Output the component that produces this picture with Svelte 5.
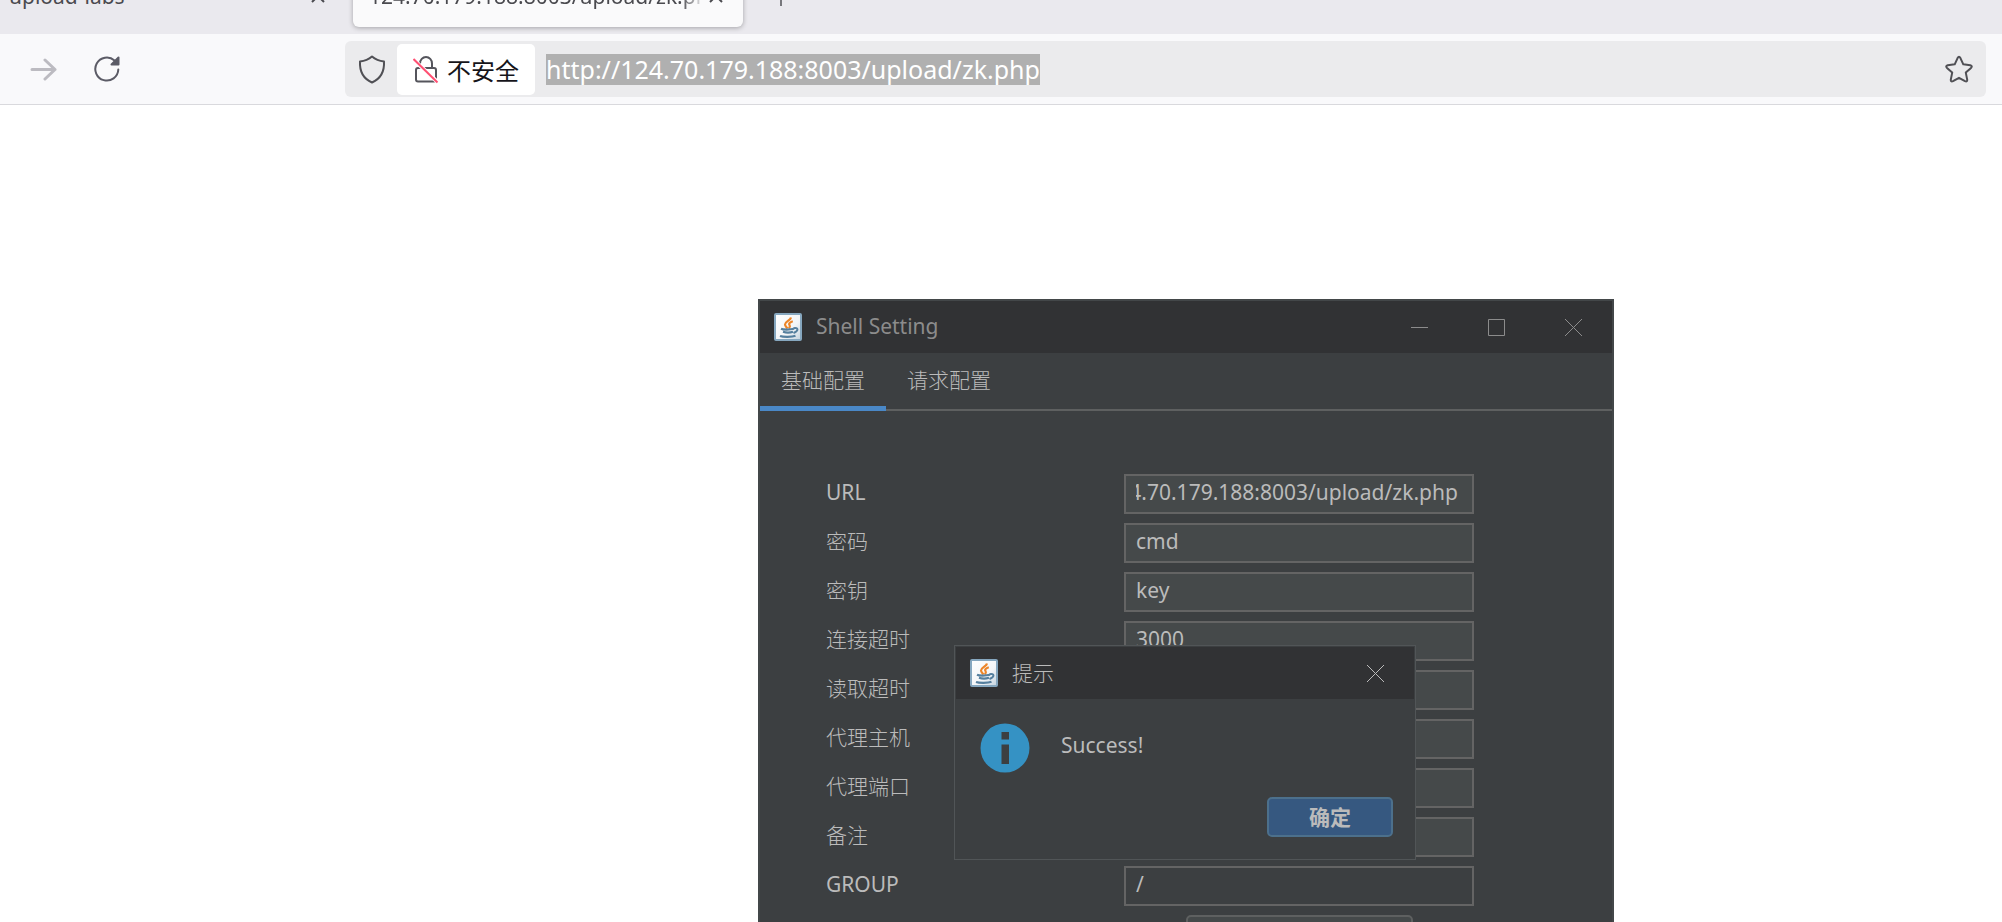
<script>
  import { onMount } from 'svelte';

  const address = 'http://124.70.179.188:8003/upload/zk.php';

  const fields = [
    { id: 'url', label: 'URL', value: address, latin: true },
    { id: 'password', label: '密码', value: 'cmd' },
    { id: 'secret', label: '密钥', value: 'key' },
    { id: 'connTimeout', label: '连接超时', value: '3000' },
    { id: 'readTimeout', label: '读取超时', value: '' },
    { id: 'proxyHost', label: '代理主机', value: '' },
    { id: 'proxyPort', label: '代理端口', value: '' },
    { id: 'remark', label: '备注', value: '' },
    { id: 'group', label: 'GROUP', value: '/', latin: true }
  ];

  let form;

  // long values show their tail, like a Swing text field
  onMount(() => {
    for (const input of form.querySelectorAll('input')) {
      input.scrollLeft = input.scrollWidth;
    }
  });
</script>

{#snippet javaIcon()}
  <svg class="java" viewBox="0 0 28 28" aria-hidden="true">
    <defs>
      <linearGradient id="plate" x1="0" y1="0" x2="1" y2="1">
        <stop offset="0" stop-color="#ffffff" />
        <stop offset="0.6" stop-color="#f3f5f7" />
        <stop offset="1" stop-color="#c3d2de" />
      </linearGradient>
    </defs>
    <rect x="1" y="1" width="26" height="26" rx="1" fill="url(#plate)" stroke="#86a7bf" stroke-width="2" />
    <path d="M17 4.500C16.500 7.500 11 8.500 11 11.500C11 13 12.500 14 13.500 15.500M18.800 8.300C16 9.200 14.200 10.500 15.500 12C16.500 13.300 15.500 14.500 15 15.500" fill="none" stroke="#ec8528" stroke-width="2.200" />
    <path d="M7 15.800C9 16.800 16 16.800 20 15.800M9 18.800C12 19.800 16 19.800 19 18.800M6 23C9 24.200 18 24.200 21.500 22.800" fill="none" stroke="#557f9e" stroke-width="2.200" />
    <path d="M19.500 15.200C24.500 14 25 18 19.500 20" fill="none" stroke="#557f9e" stroke-width="2" />
  </svg>
{/snippet}

<div class="screen">
  <nav class="tabs">
    <a class="tab first" href="/">
      <span class="tab-title">upload-labs</span>
      <svg class="x" viewBox="0 0 14 14"><path d="M1 1L13 13M13 1L1 13" /></svg>
    </a>
    <a class="tab active" href="/upload/zk.php">
      <span class="tab-title fade">124.70.179.188:8003/upload/zk.php</span>
      <svg class="x" viewBox="0 0 14 14"><path d="M1 1L13 13M13 1L1 13" /></svg>
    </a>
    <button class="new-tab" aria-label="新建标签页">
      <svg viewBox="0 0 20 20"><path d="M10 0V20M0 10H20" /></svg>
    </button>
  </nav>

  <header class="toolbar">
    <button class="tool" aria-label="前进">
      <svg class="forward" viewBox="0 0 28 28"><path d="M3 14.500H26M16 5L26 14.500L16 24" /></svg>
    </button>
    <button class="tool" aria-label="刷新">
      <svg class="reload" viewBox="0 0 28 28">
        <path d="M25.300 14.500A11.500 11.500 0 1 1 21.500 5.500" />
        <path class="solid" d="M25.500 2.500V9.500H18.500Z" />
      </svg>
    </button>
    <div class="urlbar">
      <svg class="shield" viewBox="0 0 28 30"><path d="M14 2.500C17.500 5.500 21.500 7 26 7.500C26.500 17 23 24.500 14 28.500C5 24.500 1.500 17 2 7.500C6.500 7 10.500 5.500 14 2.500Z" /></svg>
      <button class="security">
        <svg class="lock" viewBox="0 0 26 30">
          <path d="M7 12V9.500A6 6.500 0 0 1 19 9.500V13.500" />
          <rect x="3" y="14" width="20" height="13.500" rx="2" />
          <path class="halo" d="M1.500 6.500L24.500 28" />
          <path class="slash" d="M0.500 5L24.500 28.500" />
        </svg>
        <span>不安全</span>
      </button>
      <input class="address" type="text" value={address} size="40" aria-label="地址" />
      <button class="star" aria-label="收藏">
        <svg viewBox="0 0 28 28"><path d="M12.700 2.800Q14 0.500 15.300 2.800L18.300 9.300L25.300 10.200Q27.800 10.900 26 12.900L20.800 17.600L22.200 24.600Q22.400 27.200 20 26.200L14 22.800L8 26.200Q5.600 27.200 5.800 24.600L7.200 17.600L2 12.900Q0.200 10.900 2.700 10.200L9.700 9.300Z" /></svg>
      </button>
    </div>
  </header>

  <section class="window">
    <div class="titlebar">
      {@render javaIcon()}
      <h1>Shell Setting</h1>
      <div class="controls">
        <button aria-label="最小化"><svg viewBox="0 0 17 17"><path d="M0 8.500H17" /></svg></button>
        <button aria-label="最大化"><svg viewBox="0 0 17 17"><path d="M0.500 0.500H16.500V16.500H0.500Z" /></svg></button>
        <button aria-label="关闭"><svg viewBox="0 0 17 17"><path d="M0 0L17 17M17 0L0 17" /></svg></button>
      </div>
    </div>

    <div class="config-tabs">
      <button class="selected">基础配置</button>
      <button>请求配置</button>
    </div>

    <form bind:this={form}>
      {#each fields as field}
        <div class="row">
          <label for={field.id} class:latin={field.latin}>{field.label}</label>
          <input id={field.id} class:plain={field.id === 'group'} type="text" value={field.value} />
        </div>
      {/each}
      <div class="actions">
        <button class="submit" type="button" aria-label="添加"></button>
      </div>
    </form>
  </section>

  <div class="dialog" role="dialog" aria-label="提示">
    <div class="titlebar lit">
      {@render javaIcon()}
      <h1>提示</h1>
      <div class="controls">
        <button aria-label="关闭"><svg viewBox="0 0 17 17"><path d="M0 0L17 17M17 0L0 17" /></svg></button>
      </div>
    </div>
    <div class="message">
      <svg class="info" viewBox="0 0 50 50">
        <circle cx="25" cy="25" r="24.500" />
        <path d="M21.500 9H29V16.500H21.500ZM21.500 21.500H29V41H21.500Z" />
      </svg>
      <p>Success!</p>
    </div>
    <button class="ok">确定</button>
  </div>
</div>

<style>
  :global(body) {
    margin: 0;
    background: #fff;
  }

  .screen {
    position: relative;
    height: 100vh;
    overflow: hidden;
    font-family: 'Noto Sans', 'Noto Sans CJK SC', sans-serif;
  }

  svg {
    display: block;
    flex: none;
    fill: none;
  }

  button {
    padding: 0;
    border: 0;
    background: none;
    font: inherit;
    color: inherit;
  }

  /* browser tab strip */
  .tabs {
    display: flex;
    align-items: flex-end;
    box-sizing: border-box;
    height: 34px;
    padding-bottom: 7px;
    overflow: hidden;
    background: #eae9ee;
  }

  .tab {
    display: flex;
    align-items: center;
    box-sizing: border-box;
    height: 62px;
    font-size: 21px;
    color: #4a4a4f;
    text-decoration: none;
  }

  .first {
    width: 353px;
    padding: 0 28px 0 9px;
  }

  .active {
    width: 390px;
    padding: 0 20px 0 16px;
    border-radius: 6px;
    background: #fafafb;
    box-shadow: 0 1px 5px rgba(0, 0, 0, 0.3);
  }

  .tab-title {
    flex: 1;
    overflow: hidden;
    white-space: nowrap;
  }

  .fade {
    mask-image: linear-gradient(to left, transparent 4px, #000 28px);
  }

  .x {
    width: 14px;
    stroke: #4a4a4f;
    stroke-width: 2;
  }

  .new-tab {
    height: 62px;
    margin-left: 28px;
  }

  .new-tab svg {
    width: 20px;
    stroke: #77777c;
    stroke-width: 2;
  }

  /* navigation toolbar */
  .toolbar {
    display: flex;
    align-items: center;
    box-sizing: border-box;
    height: 71px;
    padding: 0 16px 0 29px;
    border-bottom: 1px solid #d9d9dd;
    background: #f9f9fb;
  }

  .tool {
    margin-right: 36px;
  }

  .tool svg {
    width: 28px;
    stroke: #5b5b66;
    stroke-width: 2;
    stroke-linecap: round;
    stroke-linejoin: round;
  }

  .tool .forward {
    stroke: #bcbbc1;
    stroke-width: 3;
  }

  .solid {
    fill: #5b5b66;
  }

  .urlbar {
    display: flex;
    flex: 1;
    align-items: center;
    box-sizing: border-box;
    height: 56px;
    margin-left: 188px;
    padding: 0 13px;
    border-radius: 6px;
    background: #ebebed;
  }

  .shield {
    width: 28px;
    stroke: #505055;
    stroke-width: 2;
    stroke-linejoin: round;
  }

  .security {
    display: flex;
    align-items: center;
    gap: 8px;
    height: 51px;
    margin: 0 11px;
    padding: 0 16px;
    border-radius: 5px;
    background: #fff;
    font-size: 24px;
    color: #15141a;
  }

  .lock {
    width: 26px;
    stroke: #55555c;
    stroke-width: 2;
  }

  .lock .halo {
    stroke: #fff;
    stroke-width: 4;
  }

  .lock .slash {
    stroke: #ff4f72;
  }

  .address {
    field-sizing: content;
    height: 31px;
    padding: 0;
    border: 0;
    background: #b0b0b0;
    font: 25px/31px 'Noto Sans', sans-serif;
    color: #fff;
  }

  .star {
    margin-left: auto;
  }

  .star svg {
    width: 28px;
    stroke: #505055;
    stroke-width: 2;
    stroke-linejoin: round;
  }

  /* desktop windows */
  .window,
  .dialog {
    position: absolute;
    box-sizing: border-box;
    background: #3c3f41;
    font-size: 21px;
    color: #bbb;
  }

  .window {
    top: 299px;
    left: 758px;
    width: 856px;
    border: 2px solid #434749;
  }

  .titlebar {
    display: flex;
    align-items: center;
    height: 52px;
    padding: 0 30px 0 14px;
    background: #313234;
    color: #8c8c8c;
  }

  .java {
    width: 28px;
  }

  h1 {
    flex: 1;
    margin: 0 0 0 14px;
    padding-bottom: 2px;
    font-size: 21px;
    font-weight: 400;
  }

  .lit {
    color: #bbb;
  }

  .lit h1 {
    font-weight: 300;
  }

  .controls {
    display: flex;
    gap: 60px;
  }

  .controls svg {
    width: 17px;
    stroke: currentColor;
    stroke-width: 1;
  }

  .config-tabs {
    display: flex;
    box-sizing: border-box;
    height: 58px;
    border-bottom: 2px solid #5e6060;
    font-weight: 300;
  }

  .config-tabs button {
    box-sizing: border-box;
    width: 126px;
    height: 58px;
    padding-bottom: 2px;
    border-bottom: 5px solid transparent;
  }

  .config-tabs .selected {
    border-color: #4a88c7;
  }

  form {
    display: flex;
    flex-direction: column;
    gap: 9px;
    padding: 63px 138px 40px 66px;
  }

  .row {
    display: flex;
    align-items: center;
    justify-content: space-between;
  }

  label {
    line-height: 36px;
    padding-bottom: 4px;
    font-weight: 300;
  }

  .latin {
    font-weight: 400;
  }

  .row input {
    box-sizing: border-box;
    width: 350px;
    height: 40px;
    padding: 0 14px 4px 10px;
    border: 2px solid #646464;
    background: #45494a;
    font: 21px 'Noto Sans', 'Noto Sans CJK SC', sans-serif;
    color: #bbb;
  }

  .row .plain {
    background: #3c3f41;
  }

  .actions {
    display: flex;
    align-self: flex-end;
    justify-content: center;
    width: 350px;
  }

  .submit {
    width: 227px;
    height: 40px;
    border: 2px solid #5e6060;
    border-radius: 5px;
    background: #45494a;
  }

  .dialog {
    top: 645px;
    left: 954px;
    display: flex;
    flex-direction: column;
    width: 462px;
    height: 215px;
    padding: 1px;
    border: 1px solid #515557;
  }

  .message {
    display: flex;
    align-items: center;
    gap: 31px;
    padding: 24px;
  }

  .info {
    width: 50px;
  }

  .info circle {
    fill: #3592c4;
  }

  .info path {
    fill: #3c3f41;
  }

  p {
    margin: 0;
    padding-bottom: 6px;
  }

  .ok {
    align-self: flex-end;
    box-sizing: border-box;
    width: 126px;
    height: 40px;
    margin-right: 21px;
    padding-bottom: 2px;
    border: 2px solid #4c708c;
    border-radius: 5px;
    background: #365880;
    font-weight: 700;
  }
</style>
